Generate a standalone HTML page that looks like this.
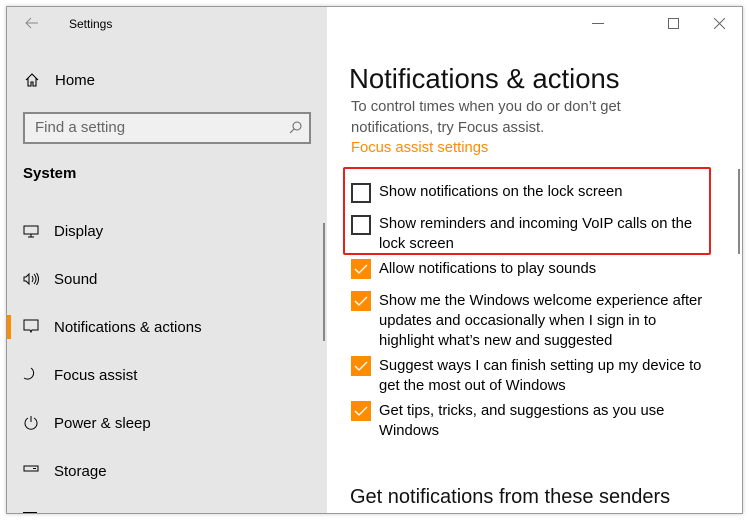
<!DOCTYPE html>
<html><head><style>
*{margin:0;padding:0;box-sizing:border-box}
body{width:756px;height:522px;background:#fff;position:relative;overflow:hidden;font-family:"Liberation Sans",sans-serif;color:#000}
.win{position:absolute;left:6px;top:6px;width:737px;height:508px;border:1px solid #9a9a9a;box-shadow:0 0 4px rgba(0,0,0,.2);background:#fff;overflow:hidden}
.left{position:absolute;left:0;top:0;width:320px;height:100%;background:#e6e6e6}
.a{position:absolute;white-space:nowrap}
.nav{font-size:15px;color:#000}
.ic{position:absolute}
.cb{position:absolute;left:344px;width:20px;height:20px}
.un{border:2px solid #333}
.ck{background:#fe8c00}
.t{position:absolute;left:372px;font-size:14.8px;line-height:20px;color:#000}
</style></head><body>
<div class="win">
<div class="left">
 <svg class="ic" style="left:17px;top:9px" width="16" height="14"><path d="M14 7H2M7 2L2 7l5 5" fill="none" stroke="#888" stroke-width="1"/></svg>
 <div class="a" style="left:62px;top:10px;font-size:12px">Settings</div>
 <svg class="ic" style="left:17px;top:65px" width="16" height="16"><path d="M2 8L8 2l6 6M4 6v8h3v-4h2v4h3V6" fill="none" stroke="#000" stroke-width="1.1"/></svg>
 <div class="a nav" style="left:48px;top:65px">Home</div>
 <div class="a" style="left:16px;top:105px;width:288px;height:32px;border:2px solid #888;background:#f0f0f0"></div>
 <div class="a" style="left:28px;top:112px;font-size:15px;color:#666">Find a setting</div>
 <svg class="ic" style="left:282px;top:113px" width="14" height="14"><circle cx="8" cy="6" r="4" fill="none" stroke="#666"/><path d="M5 9l-4 4" stroke="#666"/></svg>
 <div class="a" style="left:16px;top:158px;font-size:15px;font-weight:bold">System</div>

 <svg class="ic" style="left:16px;top:218px" width="18" height="14"><rect x="1" y="1" width="14" height="8" fill="none" stroke="#000"/><path d="M8 9v3M5 12h6" stroke="#000"/></svg>
 <div class="a nav" style="left:47px;top:216px">Display</div>
 <svg class="ic" style="left:16px;top:265px" width="18" height="14"><path d="M1 5h2l3-3v10l-3-3H1z" fill="none" stroke="#000"/><path d="M9 4q2 3 0 6M11 2q4 5 0 10M13.5 1q4 6 0 12" fill="none" stroke="#000"/></svg>
 <div class="a nav" style="left:47px;top:264px">Sound</div>
 <div class="a" style="left:0;top:308px;width:4px;height:24px;background:#fe8c00"></div>
 <svg class="ic" style="left:16px;top:312px" width="18" height="16"><path d="M1 1h14v10H9l-1 2-1-2H1z" fill="none" stroke="#000"/></svg>
 <div class="a nav" style="left:47px;top:312px">Notifications &amp; actions</div>
 <svg class="ic" style="left:16px;top:360px" width="18" height="16"><path d="M8 1a6 6 0 1 1-7 10a6 6 0 0 0 7-10z" fill="none" stroke="#000"/></svg>
 <div class="a nav" style="left:47px;top:360px">Focus assist</div>
 <svg class="ic" style="left:16px;top:408px" width="18" height="16"><path d="M5 3a6 6 0 1 0 6 0" fill="none" stroke="#000"/><path d="M8 1v6" stroke="#000"/></svg>
 <div class="a nav" style="left:47px;top:408px">Power &amp; sleep</div>
 <svg class="ic" style="left:16px;top:458px" width="18" height="10"><rect x="1" y="1" width="14" height="5" fill="none" stroke="#000"/><path d="M10 3.5h3" stroke="#000"/></svg>
 <div class="a nav" style="left:47px;top:456px">Storage</div>
 <div class="a" style="left:16px;top:505px;width:14px;height:2px;background:#000"></div>
 <div class="a" style="left:316px;top:216px;width:2px;height:118px;background:#888"></div>
</div>

<svg class="ic" style="left:585px;top:16px" width="12" height="2"><path d="M0 .5h12" stroke="#666"/></svg>
<svg class="ic" style="left:661px;top:11px" width="11" height="11"><rect x=".5" y=".5" width="10" height="10" fill="none" stroke="#666"/></svg>
<svg class="ic" style="left:707px;top:11px" width="11" height="11"><path d="M0 0l11 11M11 0L0 11" stroke="#666"/></svg>

<div class="a" style="left:342px;top:56px;font-size:27.5px;color:#111">Notifications &amp; actions</div>
<div class="a" style="left:344px;top:94px;font-size:14.8px;line-height:20px;color:#555;height:13px;overflow:hidden"><div style="margin-top:-4px">To control times when you do or don’t get</div></div>
<div class="a" style="left:344px;top:113px;font-size:14.8px;color:#555">notifications, try Focus assist.</div>
<div class="a" style="left:344px;top:133px;font-size:14.8px;color:#fe8c00">Focus assist settings</div>

<div class="a" style="left:336px;top:160px;width:368px;height:88px;border:2px solid #e52119;border-radius:2px"></div>
<div class="cb un" style="top:176px"></div><div class="t" style="top:175px">Show notifications on the lock screen</div>
<div class="cb un" style="top:208px"></div><div class="t" style="top:207px">Show reminders and incoming VoIP calls on the<br>lock screen</div>

<div class="cb ck" style="top:252px"><svg width="20" height="20"><path d="M4 10l4 4 8-8" fill="none" stroke="#fff" stroke-width="1.3"/></svg></div>
<div class="t" style="top:252px">Allow notifications to play sounds</div>
<div class="cb ck" style="top:284px"><svg width="20" height="20"><path d="M4 10l4 4 8-8" fill="none" stroke="#fff" stroke-width="1.3"/></svg></div>
<div class="t" style="top:284px">Show me the Windows welcome experience after<br>updates and occasionally when I sign in to<br>highlight what’s new and suggested</div>
<div class="cb ck" style="top:349px"><svg width="20" height="20"><path d="M4 10l4 4 8-8" fill="none" stroke="#fff" stroke-width="1.3"/></svg></div>
<div class="t" style="top:349px">Suggest ways I can finish setting up my device to<br>get the most out of Windows</div>
<div class="cb ck" style="top:394px"><svg width="20" height="20"><path d="M4 10l4 4 8-8" fill="none" stroke="#fff" stroke-width="1.3"/></svg></div>
<div class="t" style="top:394px">Get tips, tricks, and suggestions as you use<br>Windows</div>

<div class="a" style="left:343px;top:479px;font-size:20px;color:#111">Get notifications from these senders</div>
<div class="a" style="left:731px;top:162px;width:2px;height:85px;background:#888"></div>
</div>
</body></html>
